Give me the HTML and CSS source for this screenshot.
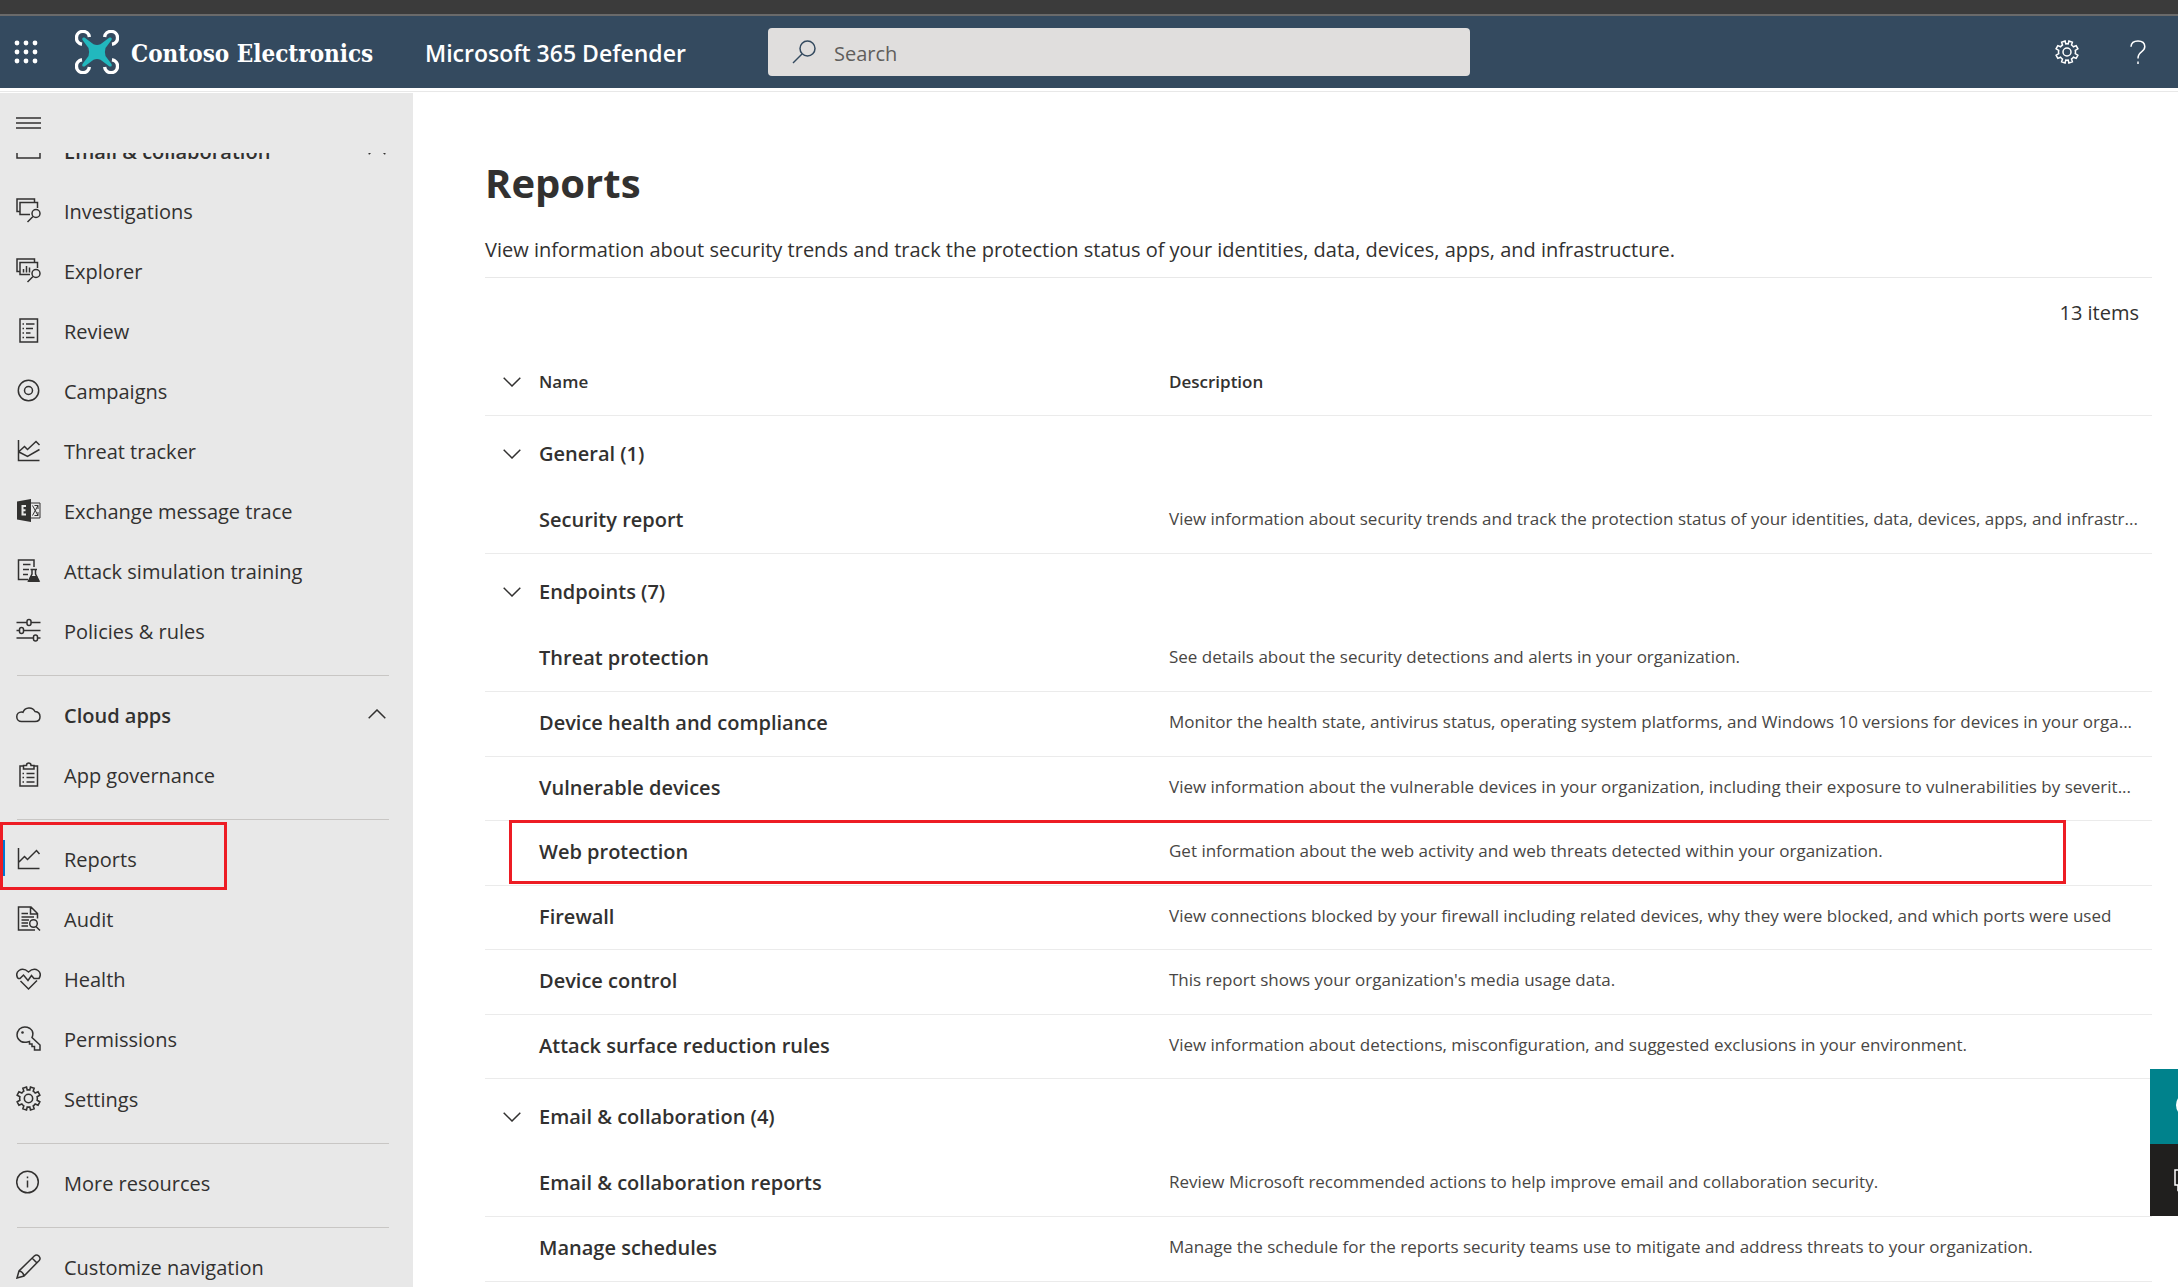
FILE: index.html
```html
<!DOCTYPE html>
<html lang="en">

<head>
    <meta charset="UTF-8">
    <meta name="viewport" content="width=device-width, initial-scale=1.0">
    <title>Reports - Microsoft 365 Defender</title>
    <link rel="stylesheet" href="styles.css">
</head>

<body>
    <svg class="sprite" aria-hidden="true">
        <symbol id="gear" viewBox="0 0 24 24">
            <path d="M10.1 1 L10.8 3.9 Q12 3.6 13.2 3.9 L13.9 1 L17.4 2.2 L16.5 5 Q17.6 5.8 18.4 6.8 L21.2 5.6 L22.9 8.8 L20.3 10.3 Q20.7 12 20.3 13.7 L22.9 15.2 L21.2 18.4 L18.4 17.2 Q17.6 18.3 16.5 19 L17.4 21.8 L13.9 23 L13.2 20.1 Q12 20.4 10.8 20.1 L10.1 23 L6.6 21.8 L7.5 19 Q6.4 18.2 5.6 17.2 L2.8 18.4 L1.1 15.2 L3.7 13.7 Q3.3 12 3.7 10.3 L1.1 8.8 L2.8 5.6 L5.6 6.8 Q6.4 5.7 7.5 5 L6.6 2.2 Z" />
            <circle cx="12" cy="12" r="4" />
        </symbol>
        <symbol id="chevron-down" viewBox="0 0 18 10">
            <path d="M0.7 0.7 L9 9 L17.3 0.7" />
        </symbol>
        <symbol id="chevron-up" viewBox="0 0 18 10">
            <path d="M0.7 9.3 L9 1 L17.3 9.3" />
        </symbol>
    </svg>

    <div class="browser-edge"></div>

    <header class="header">
        <button class="icon-button waffle" aria-label="App launcher">
            <svg width="24" height="24" viewBox="0 0 24 24">
                <g class="fill">
                    <circle cx="3" cy="3" r="2.4" /><circle cx="12" cy="3" r="2.4" /><circle cx="21" cy="3" r="2.4" />
                    <circle cx="3" cy="12" r="2.4" /><circle cx="12" cy="12" r="2.4" /><circle cx="21" cy="12" r="2.4" />
                    <circle cx="3" cy="21" r="2.4" /><circle cx="12" cy="21" r="2.4" /><circle cx="21" cy="21" r="2.4" />
                </g>
            </svg>
        </button>
        <a class="brand" href="#">
            <svg width="44" height="44" viewBox="0 0 44 44">
                <g class="rotors">
                    <path d="M7 14.3 A6.5 6.5 0 1 1 14.4 7" />
                    <path d="M37 14.3 A6.5 6.5 0 1 0 29.6 7" />
                    <path d="M7 29.7 A6.5 6.5 0 1 0 14.4 37" />
                    <path d="M37 29.7 A6.5 6.5 0 1 1 29.6 37" />
                </g>
                <path class="drone" d="M9.5 7.5 L18.5 14.2 Q22 15.8 25.500 14.2 L34.5 7.5 Q37.5 7 36.5 10 L30.5 18 Q29.3 22 30.5 26 L36.5 34 Q37.5 37 34.5 36.500 L25.5 29.800 Q22 28.200 18.5 29.800 L9.5 36.500 Q6.5 37 7.5 34 L13.5 26 Q14.7 22 13.5 18 L7.5 10 Q6.5 7 9.5 7.500 Z" />
            </svg>
            <span>Contoso Electronics</span>
        </a>
        <a class="product" href="#">Microsoft 365 Defender</a>
        <label class="search">
            <svg width="24" height="24" viewBox="0 0 24 24">
                <circle cx="15.5" cy="8.5" r="7.5" />
                <path d="M10 14 L1 23" />
            </svg>
            <input type="text" placeholder="Search" aria-label="Search">
        </label>
        <div class="header-actions">
            <button class="icon-button" aria-label="Settings">
                <svg width="24" height="24"><use href="#gear" /></svg>
            </button>
            <button class="icon-button" aria-label="Help">
                <svg width="16" height="24" viewBox="0 0 16 24">
                    <path d="M1 6.8 Q1.4 1 8 1 Q14.6 1 14.8 6.5 Q14.8 9.5 11.5 11.8 Q8 14.2 8 18.5" />
                    <path d="M8 21.5 V24" />
                </svg>
            </button>
        </div>
    </header>

    <div class="layout">
        <nav class="sidebar">
            <button class="menu-toggle" aria-label="Collapse navigation">
                <svg width="25" height="12" viewBox="0 0 25 12">
                    <path d="M0 1 H25 M0 6 H25 M0 11 H25" />
                </svg>
            </button>
            <div class="nav-scroll">
                <ul class="nav-list">
                    <li><a class="nav-item section" href="#">
                        <svg width="25" height="25" viewBox="0 0 25 25"><path d="M1 3.5 H24 V20 H1 Z M1 4 L12.5 12 L24 4" /></svg>
                        <span>Email &amp; collaboration</span>
                        <svg class="chevron" width="18" height="10"><use href="#chevron-up" /></svg>
                    </a></li>
                    <li><a class="nav-item" href="#">
                        <svg width="25" height="25" viewBox="0 0 25 25"><path d="M3.5 13.5 H1 V1 H18.5 V4 M14 16.5 H4 V4.5 H21.5 V10 M17 18.5 L11.5 24" /><circle cx="20" cy="15.5" r="4" /></svg>
                        <span>Investigations</span>
                    </a></li>
                    <li><a class="nav-item" href="#">
                        <svg width="25" height="25" viewBox="0 0 25 25"><path d="M3.5 13.5 H1 V1 H18.5 V4 M14 16.5 H4 V4.5 H21.5 V10 M17 18.5 L11.5 24 M7.5 14.5 V11 M10.5 14.5 V8 M13.5 14.5 V9.5" /><circle cx="20" cy="15.5" r="4" /></svg>
                        <span>Explorer</span>
                    </a></li>
                    <li><a class="nav-item" href="#">
                        <svg width="25" height="25" viewBox="0 0 25 25"><path d="M4 1 H21.5 V24 H4 Z M10 6 H18.5 M10 10.5 H17 M10 15 H14.5 M10 19.5 H18.5 M6.5 6 H8 M6.5 10.5 H8 M6.5 15 H8 M6.5 19.5 H8" /></svg>
                        <span>Review</span>
                    </a></li>
                    <li><a class="nav-item" href="#">
                        <svg width="25" height="25" viewBox="0 0 25 25"><circle cx="12.5" cy="12.5" r="10.2" /><circle cx="12.5" cy="12.5" r="4" /></svg>
                        <span>Campaigns</span>
                    </a></li>
                    <li><a class="nav-item" href="#">
                        <svg width="25" height="25" viewBox="0 0 25 25"><path d="M2.5 2 V22.5 H23.5 M3 13.5 L8.5 8.5 L11.5 11.5 L20 3.5 L23.5 7 M3 14 L11.5 18.5 L23.5 11.5" /></svg>
                        <span>Threat tracker</span>
                    </a></li>
                    <li><a class="nav-item" href="#">
                        <svg width="25" height="25" viewBox="0 0 25 25"><path class="fill" d="M1 3.5 L15 1 V24 L1 21.5 Z" /><path class="thin" d="M15 5 H24 V20 H15 M16.5 7.5 L22 17.5 M22 7.5 L16.5 17.5 M18.5 7.5 H22 V11 M22 14 V17.5 H18.5" /><path class="cutout" d="M10 8 H6.5 V16.5 H10 M6.5 12.2 H9.5" /></svg>
                        <span>Exchange message trace</span>
                    </a></li>
                    <li><a class="nav-item" href="#">
                        <svg width="25" height="25" viewBox="0 0 25 25"><path d="M12 21.5 H2.5 V2 H18 V9 M7 6.5 H14.5 M7 11.5 H13 M7 16.5 H12 M14.5 11.5 H21 M16 11.5 V16 L12.5 23 H23 L19.5 16 V11.5" /><path class="fill" d="M14.5 18 H21 L23.5 24 H12 Z" /></svg>
                        <span>Attack simulation training</span>
                    </a></li>
                    <li><a class="nav-item" href="#">
                        <svg width="25" height="25" viewBox="0 0 25 25"><path d="M0.5 4.5 H11 M15 4.5 H24.5 M0.5 12.5 H3.5 M7.5 12.5 H24.5 M0.5 20 H17.5 M21.5 20 H24.5" /><rect x="11" y="1.5" width="4" height="6" rx="2" /><rect x="3.5" y="9.5" width="4" height="6" rx="2" /><rect x="17.5" y="17" width="4" height="6" rx="2" /></svg>
                        <span>Policies &amp; rules</span>
                    </a></li>
                </ul>
                <ul class="nav-list divided">
                    <li><a class="nav-item section" href="#">
                        <svg width="25" height="25" viewBox="0 0 25 25"><path d="M5.5 19.5 A4.7 4.7 0 0 1 5.5 10 Q6.5 10 7 10.2 A6.6 6.6 0 0 1 19 9.5 Q24 10 24 14.7 Q24 19.5 19 19.5 Z" /></svg>
                        <span>Cloud apps</span>
                        <svg class="chevron" width="18" height="10"><use href="#chevron-up" /></svg>
                    </a></li>
                    <li><a class="nav-item" href="#">
                        <svg width="25" height="25" viewBox="0 0 25 25"><path d="M8 4 H4 V24 H21.5 V4 H17.5 M7.5 7 V3.5 H10.5 Q10.5 1 12.7 1 Q15 1 15 3.5 H18 V7 Z M10.5 11.5 H18.5 M10.5 15.5 H18.5 M10.5 20 H18.5 M6.5 11.5 H8 M6.5 15.5 H8 M6.5 20 H8" /></svg>
                        <span>App governance</span>
                    </a></li>
                </ul>
                <ul class="nav-list divided">
                    <li><a class="nav-item selected highlighted" href="#" aria-current="page">
                        <svg width="25" height="25" viewBox="0 0 25 25"><path d="M2.5 2 V22.5 H23.5 M3 16 L8.5 10.5 L11.5 13.5 L20.5 4.5 L23.5 8" /></svg>
                        <span>Reports</span>
                    </a></li>
                    <li><a class="nav-item" href="#">
                        <svg width="25" height="25" viewBox="0 0 25 25"><path d="M19 24 H2.5 V1 H15 L21.5 7.5 V12.5 M14.5 1.5 V8 H21 M5.5 7.5 H12 M5.5 11 H18 M5.5 14 H13 M5.5 17 H12 M5.5 20 H12 M20 20.5 L24 24.5" /><circle cx="17.5" cy="17.5" r="3.8" /></svg>
                        <span>Audit</span>
                    </a></li>
                    <li><a class="nav-item" href="#">
                        <svg width="25" height="25" viewBox="0 0 25 25"><path d="M2 12.5 Q-1 7.5 3 4.5 Q7.5 1.5 12.5 6 Q17.5 1.5 22 4.5 Q26 7.5 23 12.5 H18 L15.5 9.5 L12 14.5 L7.5 9 L4 12.5 H2 M4.5 15 L12.5 23 L21 14.5" /></svg>
                        <span>Health</span>
                    </a></li>
                    <li><a class="nav-item" href="#">
                        <svg width="25" height="25" viewBox="0 0 25 25"><path d="M16 11.5 Q18.5 5.5 14 2.5 Q8 -0.5 3.5 3 Q-0.5 7.5 2 12.5 Q5.5 17.5 11.5 16 L13.5 15.5 V18 H16 V20.5 H18.5 V24 H24 V19 Z" /><circle class="fill" cx="6.5" cy="6.5" r="1.3" /></svg>
                        <span>Permissions</span>
                    </a></li>
                    <li><a class="nav-item" href="#">
                        <svg width="25" height="25"><use href="#gear" /></svg>
                        <span>Settings</span>
                    </a></li>
                </ul>
                <ul class="nav-list divided">
                    <li><a class="nav-item" href="#">
                        <svg width="25" height="25" viewBox="0 0 25 25"><circle cx="11.5" cy="12" r="10.8" /><path d="M11.5 10.5 V17.5 M11.5 6.5 V8.2" /></svg>
                        <span>More resources</span>
                    </a></li>
                </ul>
                <ul class="nav-list divided">
                    <li><a class="nav-item" href="#">
                        <svg width="25" height="25" viewBox="0 0 25 25"><path d="M1 24 L3 17 L18.5 1.8 Q20.5 0.2 23 2.2 Q25 4.5 23.2 6.5 L8 22 Z M16 4 L21 9 M3 17 Q7 17.5 8 22" /></svg>
                        <span>Customize navigation</span>
                    </a></li>
                </ul>
            </div>
        </nav>

        <main class="content">
            <h1>Reports</h1>
            <p class="intro">View information about security trends and track the protection status of your identities, data, devices, apps, and infrastructure.</p>
            <p class="item-count">13 items</p>

            <table class="reports">
                <thead>
                    <tr>
                        <th class="toggle"><button aria-label="Collapse all groups"><svg width="18" height="10"><use href="#chevron-down" /></svg></button></th>
                        <th class="name">Name</th>
                        <th>Description</th>
                    </tr>
                </thead>
                <tbody>
                    <tr class="group">
                        <td class="toggle"><button aria-label="Collapse General"><svg width="18" height="10"><use href="#chevron-down" /></svg></button></td>
                        <th colspan="2">General (1)</th>
                    </tr>
                    <tr>
                        <td></td>
                        <td><a href="#">Security report</a></td>
                        <td>View information about security trends and track the protection status of your identities, data, devices, apps, and infrastr...</td>
                    </tr>
                </tbody>
                <tbody>
                    <tr class="group">
                        <td class="toggle"><button aria-label="Collapse Endpoints"><svg width="18" height="10"><use href="#chevron-down" /></svg></button></td>
                        <th colspan="2">Endpoints (7)</th>
                    </tr>
                    <tr>
                        <td></td>
                        <td><a href="#">Threat protection</a></td>
                        <td>See details about the security detections and alerts in your organization.</td>
                    </tr>
                    <tr>
                        <td></td>
                        <td><a href="#">Device health and compliance</a></td>
                        <td>Monitor the health state, antivirus status, operating system platforms, and Windows 10 versions for devices in your orga...</td>
                    </tr>
                    <tr>
                        <td></td>
                        <td><a href="#">Vulnerable devices</a></td>
                        <td>View information about the vulnerable devices in your organization, including their exposure to vulnerabilities by severit...</td>
                    </tr>
                    <tr class="highlighted">
                        <td></td>
                        <td><a href="#">Web protection</a></td>
                        <td>Get information about the web activity and web threats detected within your organization.</td>
                    </tr>
                    <tr>
                        <td></td>
                        <td><a href="#">Firewall</a></td>
                        <td>View connections blocked by your firewall including related devices, why they were blocked, and which ports were used</td>
                    </tr>
                    <tr>
                        <td></td>
                        <td><a href="#">Device control</a></td>
                        <td>This report shows your organization's media usage data.</td>
                    </tr>
                    <tr>
                        <td></td>
                        <td><a href="#">Attack surface reduction rules</a></td>
                        <td>View information about detections, misconfiguration, and suggested exclusions in your environment.</td>
                    </tr>
                </tbody>
                <tbody>
                    <tr class="group">
                        <td class="toggle"><button aria-label="Collapse Email &amp; collaboration"><svg width="18" height="10"><use href="#chevron-down" /></svg></button></td>
                        <th colspan="2">Email &amp; collaboration (4)</th>
                    </tr>
                    <tr>
                        <td></td>
                        <td><a href="#">Email &amp; collaboration reports</a></td>
                        <td>Review Microsoft recommended actions to help improve email and collaboration security.</td>
                    </tr>
                    <tr>
                        <td></td>
                        <td><a href="#">Manage schedules</a></td>
                        <td>Manage the schedule for the reports security teams use to mitigate and address threats to your organization.</td>
                    </tr>
                </tbody>
            </table>
        </main>
    </div>

    <div class="side-actions">
        <button class="help" aria-label="Need help?">
            <svg width="24" height="24" viewBox="0 0 24 24"><circle class="fill" cx="14" cy="10" r="12" /></svg>
        </button>
        <button class="feedback" aria-label="Give feedback">
            <svg width="24" height="24" viewBox="0 0 24 24"><path d="M1 2 H23 V17 H10 L4 22 V17 H1 Z" /></svg>
        </button>
    </div>
</body>

</html>
```
FILE: styles.css
```css
*,
*::before,
*::after {
    box-sizing: border-box;
}

body {
    font-family: "Open Sans", "Noto Sans", sans-serif;
    font-size: 20px;
    color: #323130;
    background-color: #ffffff;
    margin: 0;
    height: 100vh;
    display: flex;
    flex-direction: column;
    overflow: hidden;
}

a {
    color: inherit;
    text-decoration: none;
}

button {
    font: inherit;
    color: inherit;
    background: none;
    border: 0;
    padding: 0;
    display: flex;
    align-items: center;
    cursor: pointer;
}

svg {
    fill: none;
    stroke: currentColor;
    stroke-width: 1.5;
    flex-shrink: 0;
}

.fill {
    fill: currentColor;
    stroke: none;
}

.thin {
    stroke-width: 1;
}

.sprite {
    display: none;
}

.browser-edge {
    height: 16px;
    background-color: #3b3b3b;
    border-bottom: 2px solid #6a6a6a;
    flex-shrink: 0;
}

/* Header */

.header {
    display: flex;
    align-items: center;
    height: 72px;
    padding: 0 32px 0 14px;
    background-color: #344a5f;
    color: #ffffff;
    flex-shrink: 0;
}

.waffle {
    margin-right: 37px;
}

.brand {
    display: flex;
    align-items: center;
    gap: 12px;
    width: 350px;
    font-family: "DejaVu Serif Condensed", "DejaVu Serif", serif;
    font-size: 24px;
    font-weight: bold;
    white-space: nowrap;
}

.brand span {
    padding-top: 2px;
}

.rotors {
    stroke-width: 3.4;
}

.drone {
    fill: #22b8be;
    stroke: none;
}

.product {
    width: 343px;
    padding-top: 2px;
    font-size: 23px;
    font-weight: 600;
    white-space: nowrap;
}

.search {
    display: flex;
    align-items: center;
    gap: 18px;
    width: 702px;
    height: 48px;
    padding: 0 24px;
    border-radius: 4px;
    background-color: #e0dedd;
    color: #344a5f;
}

.search input {
    flex: 1;
    border: 0;
    padding: 2px 0 0;
    outline: none;
    background: none;
    font: inherit;
}

.search input::placeholder {
    color: #605e5c;
}

.header-actions {
    display: flex;
    gap: 51px;
    margin-left: auto;
}

/* Navigation */

.layout {
    display: flex;
    flex: 1;
    min-height: 0;
    margin-top: 3px;
    border-top: 1px solid #e8e8e8;
}

.sidebar {
    display: flex;
    flex-direction: column;
    width: 413px;
    margin-top: 1px;
    background-color: #e8e8e8;
    flex-shrink: 0;
}

.menu-toggle {
    height: 60px;
    padding: 0 16px;
    flex-shrink: 0;
}

.nav-scroll {
    flex: 1;
    overflow: hidden;
}

.nav-list {
    list-style: none;
    margin: 0;
    padding: 0;
}

.nav-list:first-child {
    margin-top: -33px;
}

.divided::before {
    content: "";
    display: block;
    height: 1px;
    margin: 15px 24px 8px 17px;
    background-color: #c8c6c4;
}

.nav-item {
    display: flex;
    align-items: center;
    gap: 23px;
    height: 60px;
    padding: 0 27px 0 16px;
    position: relative;
}

.nav-item span {
    padding-top: 2px;
}

.section {
    font-weight: 600;
}

.chevron {
    margin-left: auto;
}

.cutout {
    stroke: #e8e8e8;
    stroke-width: 2;
}

.selected::before {
    content: "";
    position: absolute;
    left: 0;
    top: 12px;
    width: 5px;
    height: 36px;
    background-color: #0078d4;
}

.nav-item.highlighted::after {
    content: "";
    position: absolute;
    left: 0;
    top: -6px;
    width: 227px;
    height: 68px;
    border: 3px solid #ed1c24;
}

/* Reports list */

.content {
    flex: 1;
    min-width: 0;
    padding: 61px 26px 0 72px;
}

h1 {
    margin: 0;
    font-size: 40px;
    line-height: 60px;
}

.intro {
    margin: 23px 0 0;
    padding-bottom: 13px;
    line-height: 28px;
    border-bottom: 1px solid #e8e8e8;
}

.item-count {
    margin: 0;
    padding: 21px 13px 20px;
    line-height: 28px;
    text-align: right;
}

.reports {
    width: 100%;
    border-collapse: collapse;
    table-layout: fixed;
}

.reports td,
.reports th {
    padding: 0;
    text-align: left;
    font-weight: 400;
    white-space: nowrap;
}

.reports tr {
    height: 65px;
    border-bottom: 1px solid #ebebeb;
    position: relative;
}

.reports tbody tr:nth-child(2n+4) {
    height: 64px;
}

.reports thead tr {
    height: 68px;
}

.reports thead th {
    padding-top: 2px;
    font-size: 17px;
    font-weight: 600;
}

.reports .toggle {
    width: 54px;
    padding-left: 18px;
}

.reports .name {
    width: 630px;
}

.reports .group {
    height: 73px;
    border-bottom: 0;
}

.reports .group > * {
    padding-top: 4px;
}

.reports .group th,
.reports td:nth-child(2) {
    font-size: 20px;
    font-weight: 600;
}

.reports td:nth-child(2) {
    padding-bottom: 2px;
}

.reports td:nth-child(3) {
    padding-bottom: 4px;
    font-size: 17px;
    color: #484644;
}

tr.highlighted::after {
    content: "";
    position: absolute;
    inset: 0 86px 0 24px;
    border: 3px solid #ed1c24;
}

/* Docked buttons, partly beyond the right edge */

.side-actions {
    position: fixed;
    right: 0;
    bottom: 71px;
    width: 28px;
    overflow: hidden;
    color: #ffffff;
}

.side-actions button {
    width: 75px;
    height: 72px;
    padding-left: 24px;
}

.side-actions .help {
    height: 75px;
    background-color: #00828c;
}

.side-actions .feedback {
    background-color: #201f1e;
}
```
